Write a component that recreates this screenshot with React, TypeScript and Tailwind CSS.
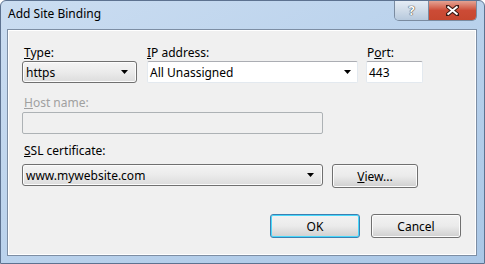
import React from "react";

const font = { fontFamily: '"Segoe UI", "Noto Sans", "Open Sans", sans-serif' };

function Arrow() {
  return (
    <svg width="7" height="4" viewBox="0 0 7 4" className="shrink-0">
      <path d="M0 0H7L3.5 4Z" fill="#000" />
    </svg>
  );
}

function DropList({ value, className }: { value: string; className: string }) {
  return (
    <div
      className={`flex h-[22px] items-center justify-between rounded-[3px] border border-[#707070] bg-gradient-to-b from-[#f4f4f4] via-[#ebebeb] to-[#dcdcdc] pl-[3px] pr-[8px] shadow-[inset_0_0_0_1px_#fcfcfc] ${className}`}
    >
      <span className="text-[12px] leading-[15px] text-black">{value}</span>
      <Arrow />
    </div>
  );
}

function Button({ children, def, className }: { children: React.ReactNode; def?: boolean; className: string }) {
  return (
    <div
      className={`flex items-center justify-center rounded-[3px] border bg-gradient-to-b from-[#f2f2f2] from-0% via-[#ebebeb] via-50% to-[#cfcfcf] text-[12px] leading-[15px] text-black ${
        def
          ? "border-[#3c7fb1] shadow-[inset_0_0_0_1px_#48d8fb]"
          : "border-[#707070] shadow-[inset_0_0_0_1px_#fcfcfc]"
      } ${className}`}
    >
      {children}
    </div>
  );
}

export default function App() {
  return (
    <div
      className="relative flex h-[264px] w-[485px] flex-col overflow-hidden rounded-t-[6px] border border-[#5d7290] bg-gradient-to-br from-[#cbddf1] via-[#bad2ec] to-[#aac7e6]"
      style={font}
    >
      {/* title bar */}
      <div className="flex h-[28px] shrink-0 items-start">
        <div className="pl-[7px] pt-[5px] text-[12px] leading-[15px] text-black">Add Site Binding</div>
        <div className="ml-auto mr-[7px] flex h-[20px] overflow-hidden rounded-b-[5px] border border-t-0 border-[#7a8ba0]">
          <div className="flex w-[34px] items-center justify-center border-r border-[#7a8ba0] bg-gradient-to-b from-[#e4ecf5] via-[#cfdbe8] to-[#b7c9dd] text-[13px] font-bold leading-none text-white [text-shadow:0_0_1px_#222,0_0_1px_#222]">
            ?
          </div>
          <div className="flex w-[47px] items-center justify-center bg-gradient-to-b from-[#e3a293] via-[#cc4b36] to-[#c7472f]">
            <svg width="13" height="11" viewBox="0 0 13 11">
              <path d="M1 1L12 10M12 1L1 10" stroke="#3a1a14" strokeWidth="4" strokeLinecap="square" />
              <path d="M1.5 1.5L11.5 9.5M11.5 1.5L1.5 9.5" stroke="#fff" strokeWidth="2" />
            </svg>
          </div>
        </div>
      </div>

      {/* client area */}
      <div className="mb-[7px] ml-[6px] mr-[7px] flex-1 border border-[#7d8ea4] bg-[#f0f0f0] pl-[14px] shadow-[inset_0_0_0_1px_#ffffff]">
        <div className="flex pt-[15px]">
          <div className="flex w-[115px] flex-col">
            <div className="pl-[2px] text-[12px] leading-[15px] text-black">
              <u>T</u>ype:
            </div>
            <DropList value="https" className="mt-[1px] w-[115px]" />
          </div>
          <div className="ml-[10px] flex w-[211px] flex-col">
            <div className="text-[12px] leading-[15px] text-black">
              <u>I</u>P address:
            </div>
            <div className="mt-[1px] flex h-[22px] items-center justify-between rounded-[2px] border border-[#e3e9ef] border-t-[#abadb3] bg-white pl-[2px] pr-[6px]">
              <span className="text-[12px] leading-[15px] text-black">All Unassigned</span>
              <Arrow />
            </div>
          </div>
          <div className="ml-[8px] flex w-[57px] flex-col">
            <div className="pl-[1px] text-[12px] leading-[15px] text-black">
              P<u>o</u>rt:
            </div>
            <div className="mt-[1px] flex h-[22px] items-center rounded-[2px] border border-[#e3e9ef] border-t-[#abadb3] bg-white pl-[2px]">
              <span className="text-[12px] leading-[15px] text-black">443</span>
            </div>
          </div>
        </div>

        <div className="mt-[12px] flex w-[301px] flex-col">
          <div className="pl-[2px] text-[12px] leading-[15px] text-[#a0a0a0]">
            <u>H</u>ost name:
          </div>
          <div className="mt-[2px] h-[22px] rounded-[2px] border border-[#adb2b5] bg-[#f0f0f0]" />
        </div>

        <div className="mt-[9px] flex flex-col">
          <div className="pl-[2px] text-[12px] leading-[15px] text-black">
            <u>S</u>SL certificate:
          </div>
          <div className="mt-[6px] flex items-start">
            <DropList value="www.mywebsite.com" className="w-[301px]" />
            <Button className="ml-[9px] h-[24px] w-[86px]">
              <span>
                <u>V</u>iew...
              </span>
            </Button>
          </div>
        </div>

        <div className="mt-[26px] flex justify-end pr-[15px]">
          <Button def className="h-[24px] w-[90px]">
            OK
          </Button>
          <Button className="ml-[11px] h-[24px] w-[90px]">Cancel</Button>
        </div>
      </div>
    </div>
  );
}
